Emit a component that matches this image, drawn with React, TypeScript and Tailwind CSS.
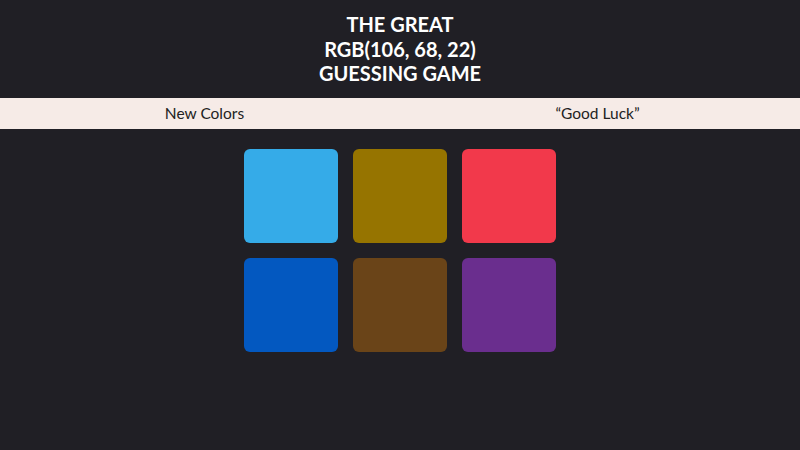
const colors = ["#35abe8", "#967400", "#f2394b", "#0358c0", "#6a4418", "#6a2e8e"];

export default function App() {
  return (
    <div className="w-[800px] h-[450px] bg-[#201f25] flex flex-col items-center" style={{ fontFamily: "Lato, sans-serif" }}>
      <h1 className="pt-[12px] text-center text-white font-bold text-[20px] leading-[24.5px] h-[98px]">
        THE GREAT
        <br />
        RGB(106, 68, 22)
        <br />
        GUESSING GAME
      </h1>
      <div className="w-full h-[31px] bg-[#f6ebe7] flex items-center text-[15.5px] text-[#222]">
        <div className="flex-1 text-center pl-[8px]">New Colors</div>
        <div className="flex-1 text-center pr-[6px]">“Good Luck”</div>
      </div>
      <div className="mt-[20px] grid grid-cols-3 gap-x-[15px] gap-y-[15px]">
        {colors.map((c) => (
          <div key={c} className="w-[94px] h-[94px] rounded-[6px]" style={{ backgroundColor: c }} />
        ))}
      </div>
    </div>
  );
}
